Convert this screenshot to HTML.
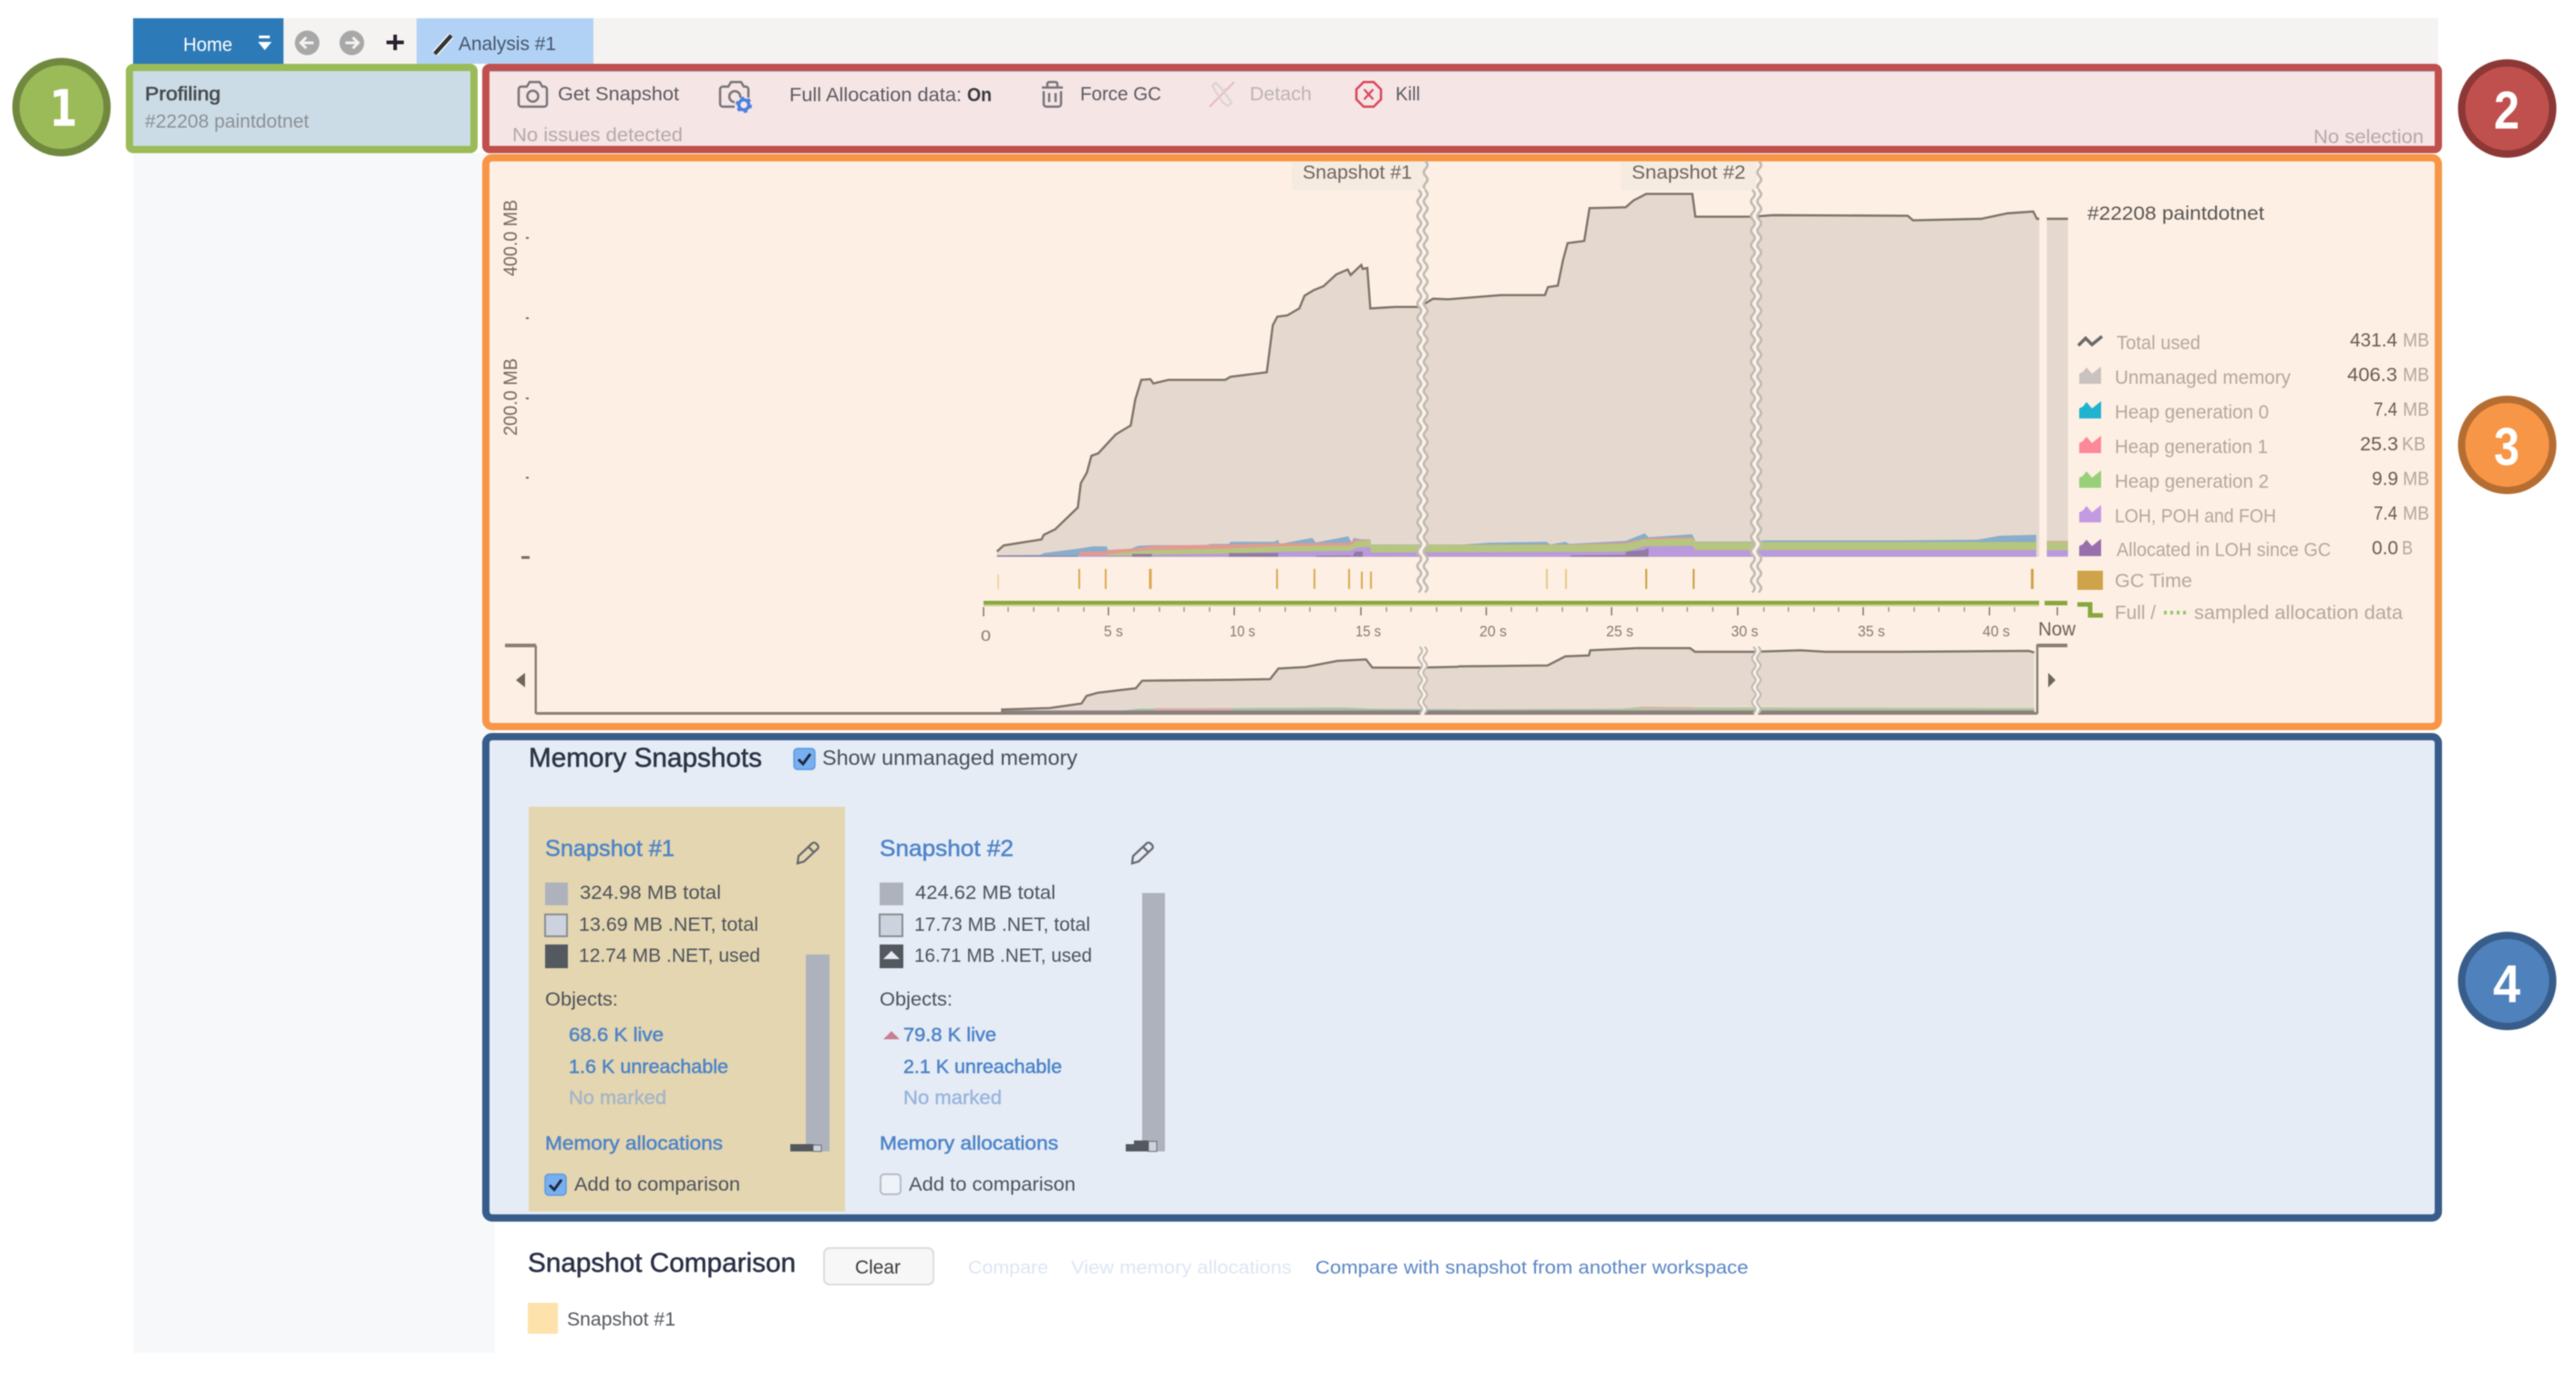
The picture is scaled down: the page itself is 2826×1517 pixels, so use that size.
<!DOCTYPE html>
<html lang="en">
<head>
<meta charset="utf-8">
<title>Memory profiling</title>
<style>
html,body{margin:0;padding:0;background:#fff;width:2826px;height:1517px;overflow:hidden}
svg{display:block;filter:blur(.55px)}
text{font-family:"Liberation Sans",sans-serif;font-size:21px}
.leg{fill:#b5a79d;font-size:21px}
.val{fill:#6b5c54;font-size:21px}
.lnk{fill:#4f84c8;stroke:#4f84c8;stroke-width:.5px;font-size:21px}
.body{fill:#4e525b;font-size:21px}
.ax{fill:#8a7a70;font-size:17px}
.ar{fill:none;stroke:#7e7468;stroke-width:2.4px;vector-effect:non-scaling-stroke}
</style>
</head>
<body>
<svg xmlns="http://www.w3.org/2000/svg" width="2826" height="1517" viewBox="0 0 2826 1517">
<defs>
<path id="w" fill="none" d="M0 0q4 4 0 8t0 8t0 8t0 8t0 8t0 8t0 8t0 8t0 8t0 8t0 8t0 8t0 8t0 8t0 8t0 8t0 8t0 8t0 8t0 8t0 8t0 8t0 8t0 8t0 8t0 8t0 8t0 8t0 8t0 8t0 8t0 8t0 8t0 8t0 8t0 8t0 8t0 8t0 8t0 8t0 8t0 8t0 8t0 8t0 8t0 8t0 8t0 8t0 8t0 8t0 8t0 8t0 8t0 8t0 8"/>
<path id="wt" fill="none" d="M0 0q4 4 0 8t0 8t0 8t0 8"/>
<path id="wm" fill="none" d="M0 0q4 4 0 8t0 8t0 8t0 8t0 8t0 8t0 8t0 8t0 8"/>
<polygon id="mt" points="0,19 0,8 4,6 8,1 14,8 24,0 24,19"/>
</defs>
<rect width="2826" height="1517" fill="#fff"/>

<!-- side panel & top bar -->
<rect x="146" y="168" width="397" height="1316" fill="#f7f8fa"/>
<rect x="146" y="20" width="2529" height="50" fill="#f4f3f1"/>
<rect x="146" y="20" width="165" height="50" fill="#2d7ab8"/>
<rect x="457" y="20" width="194" height="50" fill="#b2d2f5"/>
<text x="201" y="56" fill="#fff" font-size="20" textLength="54" lengthAdjust="spacingAndGlyphs">Home</text>
<rect x="284" y="39" width="12" height="3" fill="#fff"/>
<polygon points="283,46 298,46 290.5,55" fill="#fff"/>
<circle cx="337" cy="47" r="13.5" fill="#a8a8a8"/>
<path d="M344 47h-13M336 41l-6 6 6 6" fill="none" stroke="#f4f3f1" stroke-width="3"/>
<circle cx="386" cy="47" r="13.5" fill="#a8a8a8"/>
<path d="M379 47h13M387 41l6 6-6 6" fill="none" stroke="#f4f3f1" stroke-width="3"/>
<path d="M433.500 38v17M424 46.500h19" stroke="#2a2030" stroke-width="4" fill="none"/>
<path d="M477 59l18-20" stroke="#fff" stroke-width="7" fill="none"/>
<path d="M477 59l18-20" stroke="#333" stroke-width="4.500" fill="none"/>
<text x="503" y="55" fill="#44566b" font-size="20" textLength="107" lengthAdjust="spacingAndGlyphs">Analysis #1</text>

<!-- box 1 -->
<rect x="142" y="74" width="378" height="90" rx="4" fill="#ccdce6" stroke="#9bbb59" stroke-width="8"/>
<text x="159" y="110" fill="#474b50" font-size="20" textLength="83" lengthAdjust="spacingAndGlyphs" style="stroke:#474b50;stroke-width:.6px">Profiling</text>
<text x="159" y="140" fill="#8b9096" font-size="20" textLength="180" lengthAdjust="spacingAndGlyphs">#22208 paintdotnet</text>

<!-- box 2 -->
<rect x="533" y="74" width="2142" height="90" rx="4" fill="#f6e5e5" stroke="#c0504d" stroke-width="8"/>
<rect x="537" y="78" width="2134" height="1" fill="#b9cbe6"/>
<g fill="none" stroke="#77757a" stroke-width="2.500">
<path d="M572 95h6l3-5h11l3 5h2a3 3 0 0 1 3 3v16a3 3 0 0 1-3 3h-25a3 3 0 0 1-3-3v-16a3 3 0 0 1 3-3z"/>
<circle cx="584.500" cy="105.500" r="6"/>
<path d="M793 95h6l3-5h11l3 5h2a3 3 0 0 1 3 3v9M806 117h-13a3 3 0 0 1-3-3v-16a3 3 0 0 1 3-3"/>
<path d="M812 107a6 6 0 1 0-6 5"/>
</g>
<circle cx="816" cy="115" r="5.500" fill="#f6e5e5" stroke="#4a7fe0" stroke-width="3.500"/>
<circle cx="816" cy="115" r="8" fill="none" stroke="#4a7fe0" stroke-width="2" stroke-dasharray="4 4.400"/>
<text x="612" y="110" fill="#5c5a60" font-size="20" textLength="133" lengthAdjust="spacingAndGlyphs">Get Snapshot</text>
<text x="866" y="111" fill="#5c5a60" font-size="20" textLength="189" lengthAdjust="spacingAndGlyphs">Full Allocation data:</text>
<text x="1061" y="111" fill="#3a3a40" font-size="20" font-weight="700" textLength="27" lengthAdjust="spacingAndGlyphs">On</text>
<g fill="none" stroke="#77757a" stroke-width="2.500">
<path d="M1143 96h23M1145 100v14a3 3 0 0 0 3 3h13a3 3 0 0 0 3-3v-14M1149 95v-3a2 2 0 0 1 2-2h7a2 2 0 0 1 2 2v3M1151 102v10M1158 102v10"/>
</g>
<text x="1185" y="110" fill="#5c5a60" font-size="20" textLength="89" lengthAdjust="spacingAndGlyphs">Force GC</text>
<g fill="none" stroke-width="2">
<path d="M1354 90l-27 27" stroke="#eab8be"/>
<path d="M1330 94l4-3 6 6 8 11 3 5-4 3-5-3-8-12z M1341 102l4-5" stroke="#d8d2d4"/>
</g>
<text x="1371" y="110" fill="#bdb3b5" font-size="20" textLength="68" lengthAdjust="spacingAndGlyphs">Detach</text>
<polygon points="1496,90 1507,90 1515,98 1515,109 1507,117 1496,117 1488,109 1488,98" fill="none" stroke="#d9475a" stroke-width="2.500"/>
<path d="M1496.500 98l10 11M1506.500 98l-10 11" stroke="#d9475a" stroke-width="2.200" fill="none"/>
<text x="1531" y="110" fill="#5c5a60" font-size="20" textLength="27" lengthAdjust="spacingAndGlyphs">Kill</text>
<text x="562" y="155" fill="#b5a9ab" font-size="21" textLength="187" lengthAdjust="spacingAndGlyphs">No issues detected</text>
<text x="2538" y="157" fill="#b5a9ab" font-size="21" textLength="121" lengthAdjust="spacingAndGlyphs">No selection</text>

<!-- box 3 -->
<rect x="533" y="173" width="2142" height="624" rx="7" fill="#fdefe3" stroke="#f79646" stroke-width="8"/>
<text transform="translate(567,303) rotate(-90)" fill="#7a6a60" font-size="20" textLength="84" lengthAdjust="spacingAndGlyphs">400.0 MB</text>
<text transform="translate(567,478) rotate(-90)" fill="#7a6a60" font-size="20" textLength="85" lengthAdjust="spacingAndGlyphs">200.0 MB</text>
<g fill="#7a6a60"><rect x="577" y="260" width="3" height="2"/><rect x="577" y="348" width="3" height="2"/><rect x="577" y="436" width="3" height="2"/><rect x="577" y="523" width="3" height="2"/><rect x="572" y="610" width="9" height="3"/></g>

<rect x="1417" y="177" width="147" height="32" fill="#f6ebe0"/>
<rect x="1778" y="177" width="149" height="32" fill="#f6ebe0"/>
<text x="1429" y="196" fill="#6e6560" font-size="20" textLength="120" lengthAdjust="spacingAndGlyphs">Snapshot #1</text>
<text x="1790" y="196" fill="#6e6560" font-size="20" textLength="125" lengthAdjust="spacingAndGlyphs">Snapshot #2</text>

<!-- main chart -->
<g transform="translate(1000,160) scale(0.8292,0.3333)">
<polygon fill="#e5d9cf" points="113,1352 113,1335 122,1315 172,1295 175,1280 190,1262 220,1190 224,1110 232,1075 238,1020 247,1012 270,950 278,938 290,920 296,835 304,770 316,768 320,782 340,770 415,770 422,760 470,745 478,590 484,562 497,558 513,535 520,493 532,475 545,462 562,423 577,407 581,425 595,392 597,405 603,402 607,535 640,530 672,530 690,503 710,505 780,491 838,491 842,465 855,460 862,375 868,320 890,313 897,205 945,202 955,180 972,158 1033,158 1037,233 1112,233 1140,228 1318,230 1325,245 1415,240 1450,222 1484,216 1489,240 1492,240 1492,1352"/>
<rect x="1502" y="240" width="28" height="1112" fill="#e5d9cf"/>
<polygon fill="#88aecb" points="113,1352 113,1348 170,1346 175,1340 222,1325 240,1318 258,1318 260,1330 290,1326 300,1316 318,1314 390,1314 395,1310 420,1310 422,1303 480,1303 485,1296 487,1310 530,1290 535,1305 578,1285 582,1305 585,1290 595,1295 607,1295 608,1312 730,1312 765,1306 840,1303 845,1312 865,1303 870,1310 945,1300 970,1275 975,1288 1033,1278 1037,1302 1118,1302 1130,1298 1320,1298 1410,1296 1440,1283 1488,1280 1488,1352"/>
<polygon fill="#e29a92" points="222,1352 222,1335 258,1335 258,1330 295,1325 318,1316 420,1312 485,1308 580,1306 585,1296 607,1296 608,1313 870,1312 945,1305 970,1292 975,1290 1033,1288 1037,1304 1488,1304 1488,1352"/>
<polygon fill="#b6c67e" points="258,1352 258,1345 292,1335 318,1330 420,1325 480,1318 580,1315 590,1300 607,1298 608,1313 870,1313 945,1310 970,1295 1033,1292 1037,1304 1488,1304 1488,1352"/>
<polygon fill="#b99adc" points="113,1352 113,1349 292,1348 320,1345 420,1342 480,1336 580,1332 590,1322 607,1320 608,1338 870,1336 945,1335 970,1318 1033,1316 1037,1330 1488,1330 1488,1352"/>
<polygon fill="#917aa4" points="292,1352 292,1343 318,1343 318,1352"/>
<polygon fill="#917aa4" points="420,1352 420,1340 485,1340 485,1352"/>
<polygon fill="#917aa4" points="535,1352 535,1349 580,1348 583,1352 587,1335 597,1335 597,1352"/>
<polygon fill="#917aa4" points="113,1352 113,1348 220,1349 220,1352"/>
<polygon fill="#917aa4" points="872,1352 872,1348 945,1346 945,1335 970,1330 975,1322 975,1352"/>
<rect x="1502" y="1300" width="28" height="3" fill="#e29a92"/>
<rect x="1502" y="1303" width="28" height="27" fill="#b6c67e"/>
<rect x="1502" y="1330" width="28" height="22" fill="#b99adc"/>
<polyline class="ar" points="113,1335 122,1315 172,1295 175,1280 190,1262 220,1190 224,1110 232,1075 238,1020 247,1012 270,950 278,938 290,920 296,835 304,770 316,768 320,782 340,770 415,770 422,760 470,745 478,590 484,562 497,558 513,535 520,493 532,475 545,462 562,423 577,407 581,425 595,392 597,405 603,402 607,535 640,530 672,530 690,503 710,505 780,491 838,491 842,465 855,460 862,375 868,320 890,313 897,205 945,202 955,180 972,158 1033,158 1037,233 1112,233 1140,228 1318,230 1325,245 1415,240 1450,222 1484,216 1489,240 1492,240"/>
<polyline class="ar" points="1502,240 1530,240"/>
</g>

<!-- GC ticks -->
<g stroke="#dba94f" stroke-width="2" fill="none">
<path d="M1095 630v16" stroke="#efd6a4"/><path d="M1184 624v22M1213 624v22M1480 624v22M1401 624v22M1442 624v22M1494 627v19M1504 627v19"/>
<path d="M1262 624v22" stroke-width="3"/><path d="M1697 624v22M1718 624v22" stroke="#e8c98a"/>
<path d="M1806 624v22M1858 624v22" stroke="#c99f3e"/><path d="M2229.500 624v22" stroke-width="3" stroke="#cfa349"/>
</g>

<!-- alloc data bar -->
<rect x="1079" y="659" width="1158" height="6" fill="#c6d08f"/>
<rect x="1079" y="659" width="1158" height="4" fill="#88a83e"/>
<rect x="2243" y="659" width="25" height="5" fill="#88a83e"/>

<!-- timeline ticks -->
<path fill="none" stroke="#a39488" stroke-width="1.500" d="M1106 666v5M1134 666v5M1161 666v5M1189 666v5M1244 666v5M1272 666v5M1299 666v5M1327 666v5M1382 666v5M1410 666v5M1437 666v5M1465 666v5M1521 666v5M1548 666v5M1576 666v5M1603 666v5M1658 666v5M1686 666v5M1714 666v5M1741 666v5M1796 666v5M1824 666v5M1851 666v5M1879 666v5M1935 666v5M1962 666v5M1990 666v5M2017 666v5M2072 666v5M2100 666v5M2127 666v5M2155 666v5M2210 666v5"/>
<path fill="none" stroke="#84756a" stroke-width="1.500" d="M1079 666v10M1216 666v9M1354 666v9M1493 666v9M1630.500 666v9M1768 666v9M1906.500 666v9M2044 666v9M2182.500 666v9M2257 666v9"/>
<text class="ax" x="1076" y="703" font-size="20" textLength="11" lengthAdjust="spacingAndGlyphs">0</text>
<text class="ax" x="1211" y="698" textLength="21" lengthAdjust="spacingAndGlyphs">5 s</text>
<text class="ax" x="1349" y="698" textLength="28" lengthAdjust="spacingAndGlyphs">10 s</text>
<text class="ax" x="1487" y="698" textLength="28" lengthAdjust="spacingAndGlyphs">15 s</text>
<text class="ax" x="1623" y="698" textLength="30" lengthAdjust="spacingAndGlyphs">20 s</text>
<text class="ax" x="1762" y="698" textLength="30" lengthAdjust="spacingAndGlyphs">25 s</text>
<text class="ax" x="1899" y="698" textLength="30" lengthAdjust="spacingAndGlyphs">30 s</text>
<text class="ax" x="2038" y="698" textLength="30" lengthAdjust="spacingAndGlyphs">35 s</text>
<text class="ax" x="2175" y="698" textLength="30" lengthAdjust="spacingAndGlyphs">40 s</text>
<text x="2236" y="697" fill="#6f6058" font-size="20" textLength="41" lengthAdjust="spacingAndGlyphs">Now</text>

<!-- mini chart -->
<g transform="translate(520,560) scale(0.7015,0.3333)">
<polygon fill="#e5d9cf" points="826,670 826,655 900,650 950,635 958,610 975,600 1035,585 1045,560 1185,557 1245,555 1258,520 1300,515 1350,495 1395,490 1405,517 1480,517 1568,513 1568,670"/>
<polygon fill="#a9c3a6" points="1000,662 1040,652 1360,648 1400,652 1568,654 1568,662"/>
<rect x="1065" y="650" width="120" height="8" fill="#dfb0a8"/>
<rect x="826" y="658" width="742" height="10" fill="#8d7f8f"/>
<polyline class="ar" points="826,665 826,655 900,650 950,635 958,610 975,600 1035,585 1045,560 1185,557 1245,555 1258,520 1300,515 1350,495 1395,490 1405,517 1480,517 1568,513"/>
</g>
<g transform="translate(1600,560) scale(0.7818,0.3333)">
<polygon fill="#e5d9cf" points="0,670 0,513 125,510 150,480 183,477 185,460 250,453 325,453 332,465 415,465 480,460 515,465 620,465 800,462 808,467 808,670"/>
<polygon fill="#b3c69a" points="0,662 0,654 230,652 260,645 330,648 808,650 808,662"/>
<rect x="255" y="647" width="75" height="5" fill="#dfb0a8"/>
<rect x="0" y="658" width="808" height="10" fill="#8d7f8f"/>
<polyline class="ar" points="0,513 125,510 150,480 183,477 185,460 250,453 325,453 332,465 415,465 480,460 515,465 620,465 800,462 808,467"/>
</g>
<rect x="554" y="706" width="34" height="4" fill="#8a8076"/>
<rect x="586.500" y="708" width="2.500" height="75" fill="#8a8076"/>
<rect x="588" y="781" width="1647" height="3" fill="#8a8076"/>
<path d="M2235 783v-75h33" fill="none" stroke="#8a8076" stroke-width="2.500"/>
<rect x="2235" y="706" width="33" height="4" fill="#8a8076"/>
<polygon points="576,738 576,754 566,746" fill="#6e655c"/>
<polygon points="2247,738 2247,754 2255,746" fill="#6e655c"/>

<!-- wavy snapshot markers -->
<g stroke-linecap="round">
<use href="#wt" x="1564" y="177" stroke="#c2bab2" stroke-width="2.600"/>
<use href="#w" x="1560.500" y="209" stroke="#fbf3ea" stroke-width="5"/>
<use href="#w" x="1557" y="209" stroke="#c2bab2" stroke-width="2.600"/>
<use href="#w" x="1564" y="209" stroke="#c2bab2" stroke-width="2.600"/>
<use href="#wt" x="1930" y="177" stroke="#c2bab2" stroke-width="2.600"/>
<use href="#w" x="1926.500" y="209" stroke="#fbf3ea" stroke-width="5"/>
<use href="#w" x="1923" y="209" stroke="#c2bab2" stroke-width="2.600"/>
<use href="#w" x="1930" y="209" stroke="#c2bab2" stroke-width="2.600"/>
<use href="#wm" x="1560.500" y="710" stroke="#fbf3ea" stroke-width="5"/>
<use href="#wm" x="1558" y="710" stroke="#c2bab2" stroke-width="2"/>
<use href="#wm" x="1563.500" y="710" stroke="#c2bab2" stroke-width="2"/>
<use href="#wm" x="1926.500" y="710" stroke="#fbf3ea" stroke-width="5"/>
<use href="#wm" x="1924" y="710" stroke="#c2bab2" stroke-width="2"/>
<use href="#wm" x="1929.500" y="710" stroke="#c2bab2" stroke-width="2"/>
</g>

<!-- legend -->
<text x="2290" y="241" fill="#5a5654" font-size="21" textLength="194" lengthAdjust="spacingAndGlyphs">#22208 paintdotnet</text>
<polyline points="2280,379 2288,371 2295,378 2306,369" fill="none" stroke="#6a6a6a" stroke-width="3.500"/>
<use href="#mt" x="2281" y="402" fill="#c9c2be"/>
<use href="#mt" x="2281" y="440" fill="#1fb3d0"/>
<use href="#mt" x="2281" y="478" fill="#fd8898"/>
<use href="#mt" x="2281" y="516" fill="#98cf78"/>
<use href="#mt" x="2281" y="554" fill="#c29be3"/>
<use href="#mt" x="2281" y="591" fill="#9870ad"/>
<rect x="2279" y="626" width="28" height="21" fill="#cfa349"/>
<path d="M2279 663h14v12h14" fill="none" stroke="#88a83e" stroke-width="5"/>
<text class="leg" x="2322" y="383" textLength="92" lengthAdjust="spacingAndGlyphs">Total used</text>
<text class="leg" x="2320" y="421" textLength="193" lengthAdjust="spacingAndGlyphs">Unmanaged memory</text>
<text class="leg" x="2320" y="459" textLength="169" lengthAdjust="spacingAndGlyphs">Heap generation 0</text>
<text class="leg" x="2320" y="497" textLength="168" lengthAdjust="spacingAndGlyphs">Heap generation 1</text>
<text class="leg" x="2320" y="535" textLength="169" lengthAdjust="spacingAndGlyphs">Heap generation 2</text>
<text class="leg" x="2320" y="573" textLength="177" lengthAdjust="spacingAndGlyphs">LOH, POH and FOH</text>
<text class="leg" x="2322" y="610" textLength="235" lengthAdjust="spacingAndGlyphs">Allocated in LOH since GC</text>
<text class="leg" x="2320" y="644" textLength="85" lengthAdjust="spacingAndGlyphs">GC Time</text>
<text class="leg" x="2320" y="679" textLength="45" lengthAdjust="spacingAndGlyphs">Full /</text>
<path d="M2374 672h24" stroke="#8fc76a" stroke-width="4" stroke-dasharray="3 4" fill="none"/>
<text class="leg" x="2407" y="679" textLength="229" lengthAdjust="spacingAndGlyphs">sampled allocation data</text>
<text class="val" x="2578" y="380" textLength="52" lengthAdjust="spacingAndGlyphs">431.4</text><text class="leg" x="2636" y="380" textLength="29" lengthAdjust="spacingAndGlyphs">MB</text>
<text class="val" x="2575" y="418" textLength="55" lengthAdjust="spacingAndGlyphs">406.3</text><text class="leg" x="2636" y="418" textLength="29" lengthAdjust="spacingAndGlyphs">MB</text>
<text class="val" x="2604" y="456" textLength="26" lengthAdjust="spacingAndGlyphs">7.4</text><text class="leg" x="2636" y="456" textLength="29" lengthAdjust="spacingAndGlyphs">MB</text>
<text class="val" x="2589" y="494" textLength="42" lengthAdjust="spacingAndGlyphs">25.3</text><text class="leg" x="2635" y="494" textLength="26" lengthAdjust="spacingAndGlyphs">KB</text>
<text class="val" x="2602" y="532" textLength="29" lengthAdjust="spacingAndGlyphs">9.9</text><text class="leg" x="2636" y="532" textLength="29" lengthAdjust="spacingAndGlyphs">MB</text>
<text class="val" x="2604" y="570" textLength="26" lengthAdjust="spacingAndGlyphs">7.4</text><text class="leg" x="2636" y="570" textLength="29" lengthAdjust="spacingAndGlyphs">MB</text>
<text class="val" x="2602" y="608" textLength="29" lengthAdjust="spacingAndGlyphs">0.0</text><text class="leg" x="2635" y="608" textLength="12" lengthAdjust="spacingAndGlyphs">B</text>

<!-- box 4 -->
<rect x="533" y="808" width="2142" height="528" rx="7" fill="#e5ecf6" stroke="#385d8a" stroke-width="8"/>
<text x="580" y="841" fill="#2b3345" font-size="29" textLength="256" lengthAdjust="spacingAndGlyphs" style="font-size:30px;stroke:#2b3345;stroke-width:.5px">Memory Snapshots</text>
<rect x="871" y="821" width="23" height="23" rx="4" fill="#78aff0" stroke="#5d9ade" stroke-width="1.500"/>
<path d="M876 833l5 5 8-11" fill="none" stroke="#1d2a44" stroke-width="3"/>
<text x="902" y="839" fill="#4a4f5a" font-size="23" style="font-size:23px" textLength="280" lengthAdjust="spacingAndGlyphs">Show unmanaged memory</text>

<rect x="580" y="885" width="347" height="444" fill="#e3d6b0"/>

<!-- column 1 -->
<text class="lnk" x="598" y="939" style="font-size:25px" textLength="142" lengthAdjust="spacingAndGlyphs">Snapshot #1</text>
<path d="M875 947l1-8 15-14a3 3 0 0 1 4 0l2 2a3 3 0 0 1 0 4l-15 14zM887 929l6 6" fill="none" stroke="#6a6a6e" stroke-width="2.300"/>
<rect x="598" y="968" width="25" height="25" fill="#aeb2bc"/>
<rect x="598" y="1003" width="24" height="24" fill="#ccd3de" stroke="#8c8c90" stroke-width="2"/>
<rect x="598" y="1036" width="25" height="26" fill="#54585f"/>
<text class="body" x="636" y="986" textLength="155" lengthAdjust="spacingAndGlyphs">324.98 MB total</text>
<text class="body" x="635" y="1021" textLength="197" lengthAdjust="spacingAndGlyphs">13.69 MB .NET, total</text>
<text class="body" x="635" y="1055" textLength="199" lengthAdjust="spacingAndGlyphs">12.74 MB .NET, used</text>
<text class="body" x="598" y="1103" textLength="80" lengthAdjust="spacingAndGlyphs">Objects:</text>
<text class="lnk" x="624" y="1142" textLength="104" lengthAdjust="spacingAndGlyphs">68.6 K live</text>
<text class="lnk" x="624" y="1177" textLength="175" lengthAdjust="spacingAndGlyphs">1.6 K unreachable</text>
<text x="624" y="1211" fill="#a5b4c8" font-size="21" style="stroke:#a5b4c8;stroke-width:.4px" textLength="107" lengthAdjust="spacingAndGlyphs">No marked</text>
<text class="lnk" x="598" y="1261" textLength="195" lengthAdjust="spacingAndGlyphs">Memory allocations</text>
<rect x="598" y="1288" width="23" height="23" rx="4" fill="#78aff0" stroke="#5d9ade" stroke-width="1.500"/>
<path d="M603 1300l5 5 8-11" fill="none" stroke="#1d2a44" stroke-width="3"/>
<text class="body" x="630" y="1306" textLength="182" lengthAdjust="spacingAndGlyphs">Add to comparison</text>
<rect x="884" y="1047" width="26" height="216" fill="#aeb2bc"/>
<rect x="867" y="1255" width="26" height="8" fill="#54585f"/>
<rect x="892" y="1256" width="9" height="7" fill="#ccd3de" stroke="#6a6d74"/>

<!-- column 2 -->
<text class="lnk" x="965" y="939" style="font-size:25px" textLength="147" lengthAdjust="spacingAndGlyphs">Snapshot #2</text>
<path d="M1242 947l1-8 15-14a3 3 0 0 1 4 0l2 2a3 3 0 0 1 0 4l-15 14zM1254 929l6 6" fill="none" stroke="#6a6a6e" stroke-width="2.300"/>
<rect x="965" y="968" width="26" height="25" fill="#aeb2bc"/>
<rect x="965" y="1003" width="25" height="24" fill="#ccd3de" stroke="#8c8c90" stroke-width="2"/>
<rect x="965" y="1036" width="26" height="26" fill="#54585f"/>
<polygon points="969,1052 987,1052 978,1043" fill="#e5ecf6"/>
<text class="body" x="1004" y="986" textLength="154" lengthAdjust="spacingAndGlyphs">424.62 MB total</text>
<text class="body" x="1003" y="1021" textLength="193" lengthAdjust="spacingAndGlyphs">17.73 MB .NET, total</text>
<text class="body" x="1003" y="1055" textLength="195" lengthAdjust="spacingAndGlyphs">16.71 MB .NET, used</text>
<text class="body" x="965" y="1103" textLength="80" lengthAdjust="spacingAndGlyphs">Objects:</text>
<polygon points="969,1140 987,1140 978,1131" fill="#c97f8f"/>
<text class="lnk" x="991" y="1142" textLength="102" lengthAdjust="spacingAndGlyphs">79.8 K live</text>
<text class="lnk" x="991" y="1177" textLength="174" lengthAdjust="spacingAndGlyphs">2.1 K unreachable</text>
<text x="991" y="1211" fill="#9ab4dc" font-size="21" style="stroke:#9ab4dc;stroke-width:.4px" textLength="108" lengthAdjust="spacingAndGlyphs">No marked</text>
<text class="lnk" x="965" y="1261" textLength="196" lengthAdjust="spacingAndGlyphs">Memory allocations</text>
<rect x="966" y="1288" width="22" height="22" rx="4" fill="#eef2f9" stroke="#b8bcc4" stroke-width="2"/>
<text class="body" x="997" y="1306" textLength="183" lengthAdjust="spacingAndGlyphs">Add to comparison</text>
<rect x="1253" y="979.500" width="25" height="283.500" fill="#aeb2bc"/>
<rect x="1235" y="1255" width="20" height="8" fill="#54585f"/>
<rect x="1244" y="1251" width="16" height="12" fill="#54585f"/>
<rect x="1260" y="1252" width="9" height="11" fill="#ccd3de" stroke="#6a6d74"/>

<!-- comparison -->
<text x="579" y="1395" fill="#2a2f45" style="font-size:30px;stroke:#2a2f45;stroke-width:.5px" textLength="294" lengthAdjust="spacingAndGlyphs">Snapshot Comparison</text>
<rect x="904" y="1369" width="120" height="40" rx="6" fill="#f7f7f7" stroke="#dcdcdc" stroke-width="2"/>
<text x="938" y="1397" fill="#3c3c3c" font-size="21" textLength="50" lengthAdjust="spacingAndGlyphs">Clear</text>
<text x="1062" y="1397" fill="#dde6f4" font-size="20" style="font-size:20px" textLength="88" lengthAdjust="spacingAndGlyphs">Compare</text>
<text x="1175" y="1397" fill="#dde6f4" font-size="20" style="font-size:20px" textLength="242" lengthAdjust="spacingAndGlyphs">View memory allocations</text>
<text x="1443" y="1397" fill="#5b86c4" font-size="20" style="font-size:20px" textLength="475" lengthAdjust="spacingAndGlyphs">Compare with snapshot from another workspace</text>
<rect x="579" y="1429" width="33" height="34" fill="#fde2ab"/>
<text x="622" y="1454" fill="#55585f" font-size="21" textLength="119" lengthAdjust="spacingAndGlyphs">Snapshot #1</text>

<!-- numbered circles -->
<circle cx="67.500" cy="117.500" r="50" fill="#9bbb59" stroke="#71893f" stroke-width="8"/>
<text x="54" y="138" fill="#fff" style="font-family:'DejaVu Sans',sans-serif;font-size:55px;font-weight:700" textLength="31" lengthAdjust="spacingAndGlyphs">1</text>
<circle cx="2750.500" cy="119" r="50" fill="#c0504d" stroke="#8c3836" stroke-width="8"/>
<text x="2736" y="141" fill="#fff" style="font-size:58px;font-weight:700" textLength="28" lengthAdjust="spacingAndGlyphs">2</text>
<circle cx="2750.500" cy="488" r="50" fill="#f79646" stroke="#b66d31" stroke-width="8"/>
<text x="2736" y="510" fill="#fff" style="font-size:58px;font-weight:700" textLength="28" lengthAdjust="spacingAndGlyphs">3</text>
<circle cx="2750.500" cy="1076" r="50" fill="#4f81bd" stroke="#385d8a" stroke-width="8"/>
<text x="2735" y="1099" fill="#fff" style="font-size:58px;font-weight:700" textLength="30" lengthAdjust="spacingAndGlyphs">4</text>
</svg>
</body>
</html>
